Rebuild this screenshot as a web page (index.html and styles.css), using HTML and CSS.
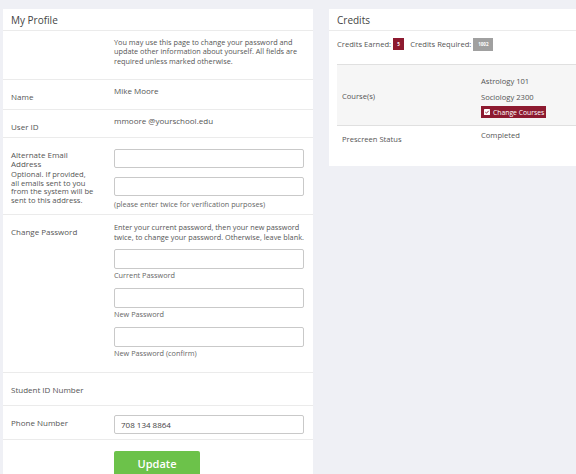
FILE: index.html
```html
<!DOCTYPE html>
<html lang="en">
<head>
    <meta charset="UTF-8">
    <title>My Profile</title>
    <link rel="stylesheet" href="styles.css">
</head>
<body>
    <div class="page">
        <div class="panel profile">
            <div class="panel-header">My Profile</div>
            <div class="row intro-row">
                <div class="label"></div>
                <div class="value help">You may use this page to change your password and update other information about yourself. All fields are required unless marked otherwise.</div>
            </div>
            <div class="row name-row">
                <div class="label">Name</div>
                <div class="value">Mike Moore</div>
            </div>
            <div class="row userid-row">
                <div class="label">User ID</div>
                <div class="value">mmoore @yourschool.edu</div>
            </div>
            <div class="row email-row">
                <div class="label">
                    <div>Alternate Email Address</div>
                    <div class="note">Optional. If provided, all emails sent to you from the system will be sent to this address.</div>
                </div>
                <div class="value">
                    <input type="text" class="field">
                    <input type="text" class="field second">
                    <div class="hint">(please enter twice for verification purposes)</div>
                </div>
            </div>
            <div class="row password-row">
                <div class="label">Change Password</div>
                <div class="value">
                    <div class="help">Enter your current password, then your new password twice, to change your password. Otherwise, leave blank.</div>
                    <input type="password" class="field pw">
                    <div class="hint">Current Password</div>
                    <input type="password" class="field pw">
                    <div class="hint">New Password</div>
                    <input type="password" class="field pw">
                    <div class="hint">New Password (confirm)</div>
                </div>
            </div>
            <div class="row student-row">
                <div class="label">Student ID Number</div>
                <div class="value"></div>
            </div>
            <div class="row phone-row">
                <div class="label">Phone Number</div>
                <div class="value">
                    <input type="text" class="field phone" value="708 134 8864">
                </div>
            </div>
            <div class="row submit-row">
                <div class="label"></div>
                <div class="value"><button class="btn-update">Update</button></div>
            </div>
        </div>
        <div class="panel credits">
            <div class="panel-header">Credits</div>
            <div class="credits-summary">
                <span>Credits Earned:</span><span class="badge badge-red">5</span><span class="req">Credits Required:</span><span class="badge badge-gray">1002</span>
            </div>
            <div class="credit-table">
                <div class="crow course-row">
                    <div class="clabel">Course(s)</div>
                    <div class="cvalue">
                        <div class="course">Astrology 101</div>
                        <div class="course">Sociology 2300</div>
                        <button class="btn-courses">
                            <svg width="6" height="6" viewBox="0 0 6 6"><rect width="6" height="6" rx="0.6" fill="#fff"/><path d="M1.3 3.1 L2.5 4.2 L4.7 1.8" stroke="#8d1a30" stroke-width="0.9" fill="none"/></svg>
                            Change Courses
                        </button>
                    </div>
                </div>
                <div class="crow status-row">
                    <div class="clabel">Prescreen Status</div>
                    <div class="cvalue">Completed</div>
                </div>
            </div>
        </div>
    </div>
</body>
</html>
```

FILE: styles.css
```css
* {
    margin: 0;
    padding: 0;
    box-sizing: border-box;
    font-family: "Open Sans", Arial, sans-serif;
}
body, html {
    width: 100%;
    height: 100%;
    overflow: hidden;
    background: #eff0f5;
}
.page {
    display: flex;
    align-items: flex-start;
    gap: 16px;
    padding: 9px 0 0 3px;
}
.panel {
    background: #fff;
    flex-shrink: 0;
}
.profile {
    width: 310px;
}
.credits {
    width: 270px;
    padding-bottom: 6px;
}
.panel-header {
    height: 22px;
    line-height: 22px;
    padding: 0 8px;
    font-size: 10px;
    color: #444;
    border-bottom: 1px solid #ebebeb;
}
.row {
    display: grid;
    grid-template-columns: 103px 1fr;
    padding: 0 9px 0 8px;
    border-bottom: 1px solid #ebebeb;
    color: #555;
}
.label {
    font-size: 8px;
    line-height: 10px;
    padding-top: 12px;
}
.value {
    font-size: 8px;
    line-height: 10px;
}
.help {
    font-size: 7.3px;
    line-height: 9.3px;
    color: #555;
}
.intro-row {
    height: 49px;
}
.intro-row .value {
    padding-top: 7px;
}
.name-row {
    height: 30px;
}
.name-row .value, .userid-row .value {
    padding-top: 6px;
}
.userid-row {
    height: 28px;
}
.email-row {
    height: 77px;
}
.email-row .label {
    line-height: 9px;
    padding-top: 12px;
    padding-right: 20px;
}
.note {
    font-size: 7.6px;
    line-height: 8.7px;
    margin-top: 2px;
}
.email-row .value {
    padding-top: 11px;
}
.field {
    display: block;
    width: 190px;
    height: 19px;
    border: 1px solid #c9c9c9;
    border-radius: 2px;
    background: #fff;
    font-size: 8px;
    color: #444;
    padding: 0 6px;
}
.field.second {
    margin-top: 9px;
}
.hint {
    font-size: 7.3px;
    line-height: 10px;
    margin-top: 3px;
    color: #666;
}
.password-row {
    height: 158px;
}
.password-row .value {
    padding-top: 7px;
}
.password-row .help {
    line-height: 10px;
}
.field.pw {
    height: 20px;
    margin-top: 8px;
}
.password-row .help + .field.pw {
    margin-top: 7px;
}
.password-row .hint {
    margin-top: 1px;
}
.student-row {
    height: 33px;
}
.phone-row {
    height: 34px;
}
.phone-row .value {
    padding-top: 9px;
}
.submit-row {
    border-bottom: none;
    height: 40px;
}
.submit-row .value {
    padding-top: 11px;
}
.btn-update {
    width: 86px;
    height: 25px;
    border: none;
    border-radius: 2px;
    background: #6cc24a;
    color: #fff;
    font-size: 11px;
    font-weight: 600;
}
.credits-summary {
    display: flex;
    align-items: center;
    padding: 0 8px;
    height: 33px;
    padding-bottom: 7px;
    font-size: 7.6px;
    line-height: 14px;
    color: #555;
}
.req {
    margin-left: 6px;
    margin-right: 2px;
}
.badge {
    display: inline-block;
    height: 12px;
    line-height: 12px;
    font-size: 4.5px;
    font-weight: 700;
    color: #fff;
    text-align: center;
}
.badge-red {
    width: 11px;
    margin-left: 2px;
    background: #8d1a30;
}
.badge-gray {
    width: 20px;
    height: 13px;
    line-height: 13px;
    background: #a0a0a0;
}
.credit-table {
    margin-left: 8px;
    border-top: 1px solid #e0e0e0;
    color: #555;
}
.crow {
    display: grid;
    grid-template-columns: 144px 1fr;
    border-bottom: 1px solid #e0e0e0;
}
.course-row {
    height: 61px;
    background: #f6f6f6;
}
.course-row .clabel {
    align-self: center;
    padding-top: 2px;
}
.clabel {
    font-size: 7.6px;
    line-height: 10px;
    padding-left: 5px;
}
.cvalue {
    font-size: 7.6px;
    line-height: 10px;
}
.course-row .cvalue {
    padding-top: 11px;
}
.course {
    height: 16px;
}
.btn-courses {
    display: flex;
    align-items: center;
    gap: 3px;
    width: 65px;
    height: 12px;
    padding-left: 3px;
    border: none;
    background: #8d1a30;
    color: #fff;
    font-size: 6.8px;
    margin-top: -2px;
}
.status-row {
    height: 34px;
    border-bottom: none;
}
.status-row .clabel {
    padding-top: 8px;
}
.status-row .cvalue {
    padding-top: 4px;
}
```
